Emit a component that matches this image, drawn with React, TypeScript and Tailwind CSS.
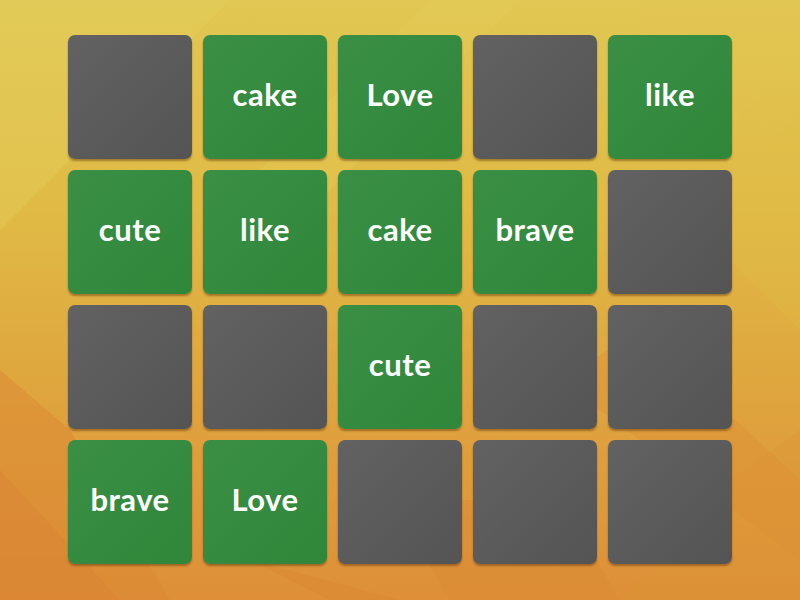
const tiles: (string | null)[] = [
  null, "cake", "Love", null, "like",
  "cute", "like", "cake", "brave", null,
  null, null, "cute", null, null,
  "brave", "Love", null, null, null,
];

function Backdrop() {
  return (
    <svg className="absolute inset-0" width="800" height="600" viewBox="0 0 800 600">
      <defs>
        <linearGradient id="bg" x1="0" y1="0" x2="0" y2="1">
          <stop offset="0" stopColor="#e1c753" />
          <stop offset="0.35" stopColor="#e0ba45" />
          <stop offset="0.65" stopColor="#dfa53e" />
          <stop offset="1" stopColor="#de8f38" />
        </linearGradient>
      </defs>
      <rect width="800" height="600" fill="url(#bg)" />
      <polygon points="0,0 230,0 0,230" fill="#e6d060" opacity="0.35" />
      <polygon points="430,0 520,0 300,220 250,180" fill="#e6cc5a" opacity="0.35" />
      <polygon points="640,0 800,0 800,60 700,150 640,60" fill="#e4c553" opacity="0.3" />
      <polygon points="800,110 800,330 690,220" fill="#e0c048" opacity="0.25" />
      <polygon points="0,370 0,600 170,600 70,430" fill="#dc8834" opacity="0.5" />
      <polygon points="0,470 0,600 120,600" fill="#da8232" opacity="0.45" />
      <polygon points="250,560 400,600 330,600" fill="#da8733" opacity="0.45" />
      <polygon points="390,500 560,500 620,600 450,600" fill="#da8a34" opacity="0.4" />
      <polygon points="800,430 800,600 620,600 730,480" fill="#dc9436" opacity="0.35" />
      <polygon points="560,380 640,330 800,480 800,560" fill="#dc8f35" opacity="0.4" />
    </svg>
  );
}

function Tile({ word }: { word: string | null }) {
  if (!word) {
    return (
      <div className="h-[124px] rounded-[7px] bg-gradient-to-br from-[#626262] to-[#545454] shadow-[0_2px_2px_rgba(90,50,10,0.45)]" />
    );
  }
  return (
    <div className="flex h-[124px] items-center justify-center rounded-[7px] bg-gradient-to-br from-[#3a8f44] to-[#2f873a] shadow-[0_2px_2px_rgba(90,50,10,0.45)]">
      <span className="pb-[6px] font-['Lato',sans-serif] text-[31px] font-bold tracking-[0.5px] text-white">
        {word}
      </span>
    </div>
  );
}

export default function App() {
  return (
    <div className="relative h-[600px] w-[800px] overflow-hidden">
      <Backdrop />
      <div className="relative grid grid-cols-[repeat(5,124px)] gap-[11px] pl-[68px] pt-[35px]">
        {tiles.map((w, i) => (
          <Tile key={i} word={w} />
        ))}
      </div>
    </div>
  );
}
